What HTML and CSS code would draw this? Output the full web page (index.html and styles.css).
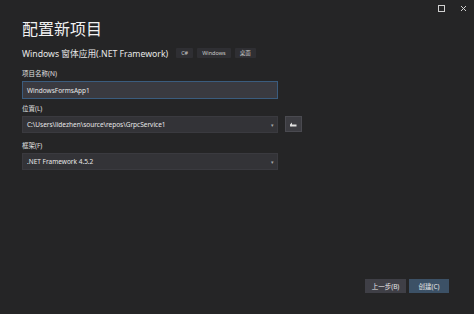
FILE: index.html
```html
<!DOCTYPE html>
<html lang="zh-cn">
<head>
    <meta charset="UTF-8">
    <title>配置新项目</title>
    <link rel="stylesheet" href="styles.css">
</head>
<body>
    <div class="window">
        <div class="titlebar">
            <span class="win-btn">
                <svg width="7" height="7" viewBox="0 0 7 7"><rect x="0.5" y="0.5" width="6" height="6" fill="none" stroke="#d0d0d0" stroke-width="1"/></svg>
            </span>
            <span class="win-btn">
                <svg width="7" height="7" viewBox="0 0 7 7"><path d="M1 1L6 6M6 1L1 6" stroke="#d0d0d0" stroke-width="1"/></svg>
            </span>
        </div>

        <div class="content">
            <h1>配置新项目</h1>

            <div class="subtitle">
                <span class="app-name">Windows 窗体应用(.NET Framework)</span>
                <span class="tag">C#</span>
                <span class="tag">Windows</span>
                <span class="tag">桌面</span>
            </div>

            <label class="field-label first">项目名称(N)</label>
            <div class="input focused">WindowsFormsApp1</div>

            <label class="field-label">位置(L)</label>
            <div class="row">
                <div class="input combo">
                    <span>C:\Users\lidezhen\source\repos\GrpcService1</span>
                    <span class="caret">▾</span>
                </div>
                <div class="browse">
                    <svg width="7" height="5" viewBox="0 0 7 5"><path d="M0 2.5H6.5V4.5H0Z" fill="#e0e0e0"/><path d="M0 2.5L2 0.5V4.5Z" fill="#e0e0e0"/></svg>
                </div>
            </div>

            <label class="field-label">框架(F)</label>
            <div class="input combo">
                <span>.NET Framework 4.5.2</span>
                <span class="caret">▾</span>
            </div>
        </div>

        <div class="footer">
            <button class="btn">上一步(B)</button>
            <button class="btn primary">创建(C)</button>
        </div>
    </div>
</body>
</html>
```

FILE: styles.css
```css
html, body {
    margin: 0;
    padding: 0;
}
body {
    background-color: #252526;
    color: #f1f1f1;
    font-family: "Noto Sans", "Noto Sans CJK SC", sans-serif;
}
.window {
    width: 474px;
    height: 314px;
    display: flex;
    flex-direction: column;
    box-sizing: border-box;
}
.titlebar {
    height: 14px;
    display: flex;
    justify-content: flex-end;
    align-items: center;
    gap: 15px;
    padding: 2px 7px 0 0;
    box-sizing: border-box;
}
.win-btn {
    display: flex;
    width: 7px;
    height: 7px;
}
.content {
    padding: 0 0 0 22px;
}
h1 {
    margin: 5px 0 0 0;
    font-size: 16px;
    line-height: 20px;
    font-weight: normal;
    color: #f1f1f1;
}
.subtitle {
    display: flex;
    align-items: center;
    margin-top: 8px;
    height: 12px;
}
.app-name {
    font-size: 8.7px;
    color: #e8e8e8;
    margin-right: 8px;
}
.tag {
    background-color: #2f2f33;
    color: #c8c8c8;
    font-size: 5.5px;
    line-height: 10px;
    padding: 0 5px;
    margin-right: 4px;
    border-radius: 1px;
}
.field-label {
    display: block;
    font-size: 6.5px;
    line-height: 8px;
    color: #e0e0e0;
    margin-top: 6px;
    margin-bottom: 3px;
}
.field-label.first {
    margin-top: 11px;
}
.input {
    width: 256px;
    height: 17px;
    box-sizing: border-box;
    background-color: #333337;
    border: 1px solid #3a3a3f;
    font-size: 6.5px;
    color: #e8e8e8;
    padding: 0 4px;
    display: flex;
    align-items: center;
}
.input.focused {
    height: 18px;
    background-color: #3a3a40;
    border-color: #3b5c7e;
}
.combo {
    justify-content: space-between;
}
.caret {
    font-size: 5px;
    color: #aaaaaa;
    margin-right: -1px;
}
.row {
    display: flex;
    align-items: flex-start;
    gap: 7px;
    margin-bottom: 9px;
}
.browse {
    width: 17px;
    height: 16px;
    background-color: #3c3c41;
    border: 1px solid #4a4a50;
    box-sizing: border-box;
    display: flex;
    align-items: center;
    justify-content: center;
}
.footer {
    margin-top: auto;
    display: flex;
    justify-content: flex-end;
    gap: 3px;
    padding: 0 25px 21px 0;
}
.btn {
    width: 41px;
    height: 14px;
    padding: 0;
    border: none;
    border-radius: 0;
    background-color: #3f3f46;
    color: #e8e8e8;
    font-family: "Noto Sans", "Noto Sans CJK SC", sans-serif;
    font-size: 6.5px;
}
.btn.primary {
    width: 40px;
    background-color: #3c5166;
}
```
